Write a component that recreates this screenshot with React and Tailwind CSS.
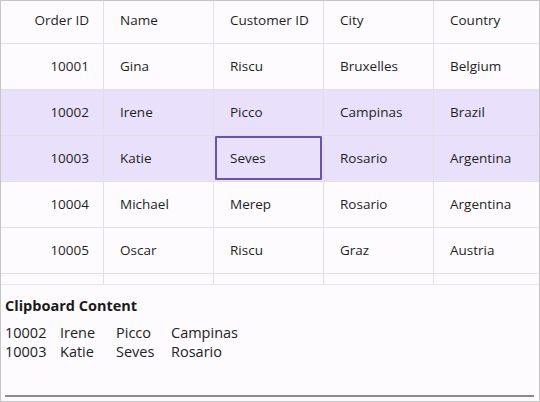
const COLUMNS = [
  { key: 'id', label: 'Order ID', width: 'w-[103px]', align: 'right' },
  { key: 'name', label: 'Name', width: 'w-[110px]' },
  { key: 'customer', label: 'Customer ID', width: 'w-[110px]' },
  { key: 'city', label: 'City', width: 'w-[110px]' },
  { key: 'country', label: 'Country', width: 'flex-1' },
];

const ROWS = [
  { id: '10001', name: 'Gina', customer: 'Riscu', city: 'Bruxelles', country: 'Belgium' },
  { id: '10002', name: 'Irene', customer: 'Picco', city: 'Campinas', country: 'Brazil', selected: true },
  { id: '10003', name: 'Katie', customer: 'Seves', city: 'Rosario', country: 'Argentina', selected: true, current: 'customer' },
  { id: '10004', name: 'Michael', customer: 'Merep', city: 'Rosario', country: 'Argentina' },
  { id: '10005', name: 'Oscar', customer: 'Riscu', city: 'Graz', country: 'Austria' },
  { id: '', name: '', customer: '', city: '', country: '' },
];

const CLIPBOARD = [
  ['10002', 'Irene', 'Picco', 'Campinas'],
  ['10003', 'Katie', 'Seves', 'Rosario'],
];

function Cell({ col, children, last, current, header }) {
  return (
    <div
      className={`${col.width} relative flex items-center h-full ${last ? '' : 'border-r border-[#e3dfe8]'} ${
        col.align === 'right' ? 'justify-end pr-[14px]' : 'pl-[16px]'
      } ${header ? 'pb-[4px]' : ''}`}
    >
      {children}
      {current && (
        <div className="absolute inset-x-[1px] top-0 bottom-[1px] border-2 border-[#6b52ad] rounded-[1px]" />
      )}
    </div>
  );
}

export default function App() {
  return (
    <div
      className="w-[540px] h-[402px] bg-[#fdfbfe] border border-[#c6c6c6] flex flex-col text-[#1f1f1f] overflow-hidden"
      style={{ fontFamily: '"Open Sans", "Noto Sans", sans-serif' }}
    >
      {/* Grid */}
      <div className="h-[284px] overflow-hidden border-b border-[#ebe7ee] text-[13.5px] shrink-0">
        <div className="flex h-[43px] border-b border-[#e3dfe8]">
          {COLUMNS.map((col, i) => (
            <Cell key={col.key} col={col} last={i === COLUMNS.length - 1} header>
              {col.label}
            </Cell>
          ))}
        </div>
        {ROWS.map((row, r) => (
          <div
            key={r}
            className={`flex h-[46px] border-b border-[#e3dfe8] ${row.selected ? 'bg-[#e9e0fc]' : ''}`}
          >
            {COLUMNS.map((col, i) => (
              <Cell key={col.key} col={col} last={i === COLUMNS.length - 1} current={row.current === col.key}>
                {row[col.key]}
              </Cell>
            ))}
          </div>
        ))}
      </div>

      {/* Clipboard */}
      <div className="flex-1 flex flex-col px-[4px] pt-[11px]">
        <div className="text-[14.5px] font-bold text-[#1a1a1a] leading-[20px]">Clipboard Content</div>
        <div className="mt-[7px] text-[14.5px] leading-[19px] text-[#222]">
          {CLIPBOARD.map((line, i) => (
            <div key={i} className="grid grid-cols-[55px_56px_55px_auto]">
              {line.map((v, j) => (
                <span key={j}>{v}</span>
              ))}
            </div>
          ))}
        </div>
        <div className="mt-auto mb-[4px] h-[2px] bg-[#8c8c8c] mr-[1px]" />
      </div>
    </div>
  );
}
